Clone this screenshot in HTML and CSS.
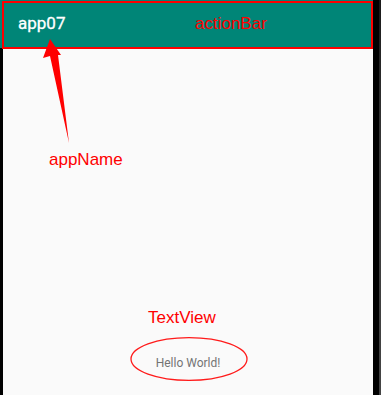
FILE: index.html
```html
<!DOCTYPE html>
<html>
<head>
<meta charset="utf-8">
<link rel="stylesheet" href="styles.css">
</head>
<body>
<div class="stage">
  <div class="device">
    <div class="appbar"><span class="title">app07</span></div>
    <div class="content">
      <span class="hello">Hello World!</span>
    </div>
    <div class="mark-box"></div>
    <span class="note note-actionbar">actionBar</span>
    <span class="note note-appname">appName</span>
    <span class="note note-textview">TextView</span>
    <svg class="arrow" width="373" height="395" viewBox="0 0 373 395">
      <polygon points="50,39 43,58 50,56 69,143 58,55 61,55" fill="#ff0000"/>
    </svg>
    <svg class="ring" width="120" height="46" viewBox="0 0 120 46">
      <ellipse cx="59" cy="22" rx="58" ry="21.3" fill="none" stroke="#ff1a1a" stroke-width="1.3"/>
    </svg>
  </div>
  <div class="gap"></div>
  <div class="edge"></div>
</div>
</body>
</html>
```
FILE: styles.css
```css
html, body {
  margin: 0;
  padding: 0;
  background: #000;
}
.stage {
  display: flex;
  width: 381px;
  height: 395px;
  overflow: hidden;
}
.device {
  position: relative;
  width: 373px;
  height: 395px;
  display: flex;
  flex-direction: column;
}
.gap {
  width: 6px;
  background: #000;
}
.edge {
  width: 2px;
  background: linear-gradient(#1a1a1a, #3a3a3a 40%, #444);
}
.appbar {
  height: 48px;
  flex: none;
  background: #008577;
  display: flex;
  align-items: center;
  padding-left: 18px;
  box-sizing: border-box;
}
.title {
  font-family: Roboto, "Liberation Sans", sans-serif;
  font-weight: 400;
  font-size: 17px;
  color: #fff;
  line-height: 20px;
  position: relative;
  top: -1px;
  -webkit-text-stroke: 0.3px #fff;
}
.content {
  flex: 1;
  margin-left: 3px;
  background: #fafafa;
  display: flex;
  flex-direction: column;
  align-items: center;
  justify-content: flex-end;
  padding-bottom: 24px;
}
.hello {
  font-family: Roboto, "Liberation Sans", sans-serif;
  font-size: 12px;
  line-height: 16px;
  color: #747474;
}
.mark-box {
  position: absolute;
  left: 2px;
  top: 1px;
  width: 371px;
  height: 48px;
  border: 2px solid #ff0000;
  box-sizing: border-box;
}
.note {
  position: absolute;
  font-family: "Liberation Sans", Arial, sans-serif;
  font-size: 17px;
  line-height: 20px;
  color: #ff0000;
  white-space: nowrap;
}
.note-actionbar {
  left: 195px;
  top: 14px;
}
.note-appname {
  left: 49px;
  top: 150px;
}
.note-textview {
  left: 148px;
  top: 308px;
}
.arrow {
  position: absolute;
  left: 0;
  top: 0;
}
.ring {
  position: absolute;
  left: 130px;
  top: 337px;
}
```
